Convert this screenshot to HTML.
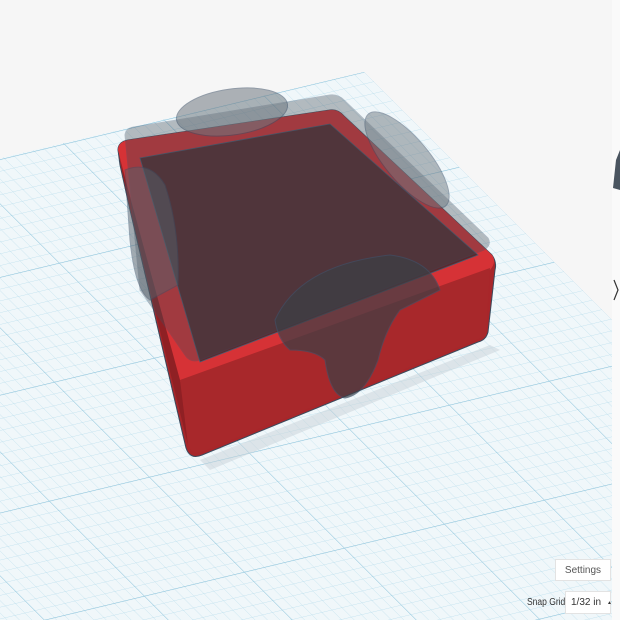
<!DOCTYPE html>
<html><head><style>
html,body{margin:0;padding:0;width:620px;height:620px;overflow:hidden;background:#f6f6f6;font-family:"Liberation Sans",sans-serif}
.btn{position:absolute;background:#fff;border:1px solid #e3e3e3;color:#555;font-size:10px;display:flex;align-items:center;justify-content:center;white-space:nowrap;box-sizing:border-box}
</style></head><body>
<svg width="620" height="620" style="position:absolute;left:0;top:0">
<defs>
<pattern id="g1" width="1" height="1" patternUnits="userSpaceOnUse" patternTransform="matrix(10,-2.4,9.5,9.5,364,72)">
<path d="M0 0H1M0 0V1" stroke="#b3dbeb" stroke-width="0.06" fill="none"/>
</pattern>
<pattern id="g2" width="10" height="10" patternUnits="userSpaceOnUse" patternTransform="matrix(10,-2.4,9.5,9.5,364,72)">
<path d="M0 0H10M0 0V10" stroke="#8cc3db" stroke-width="0.1" fill="none"/>
</pattern>
</defs>
<polygon points="364,72 0,158 0,620 620,620 620,328" fill="#f0f7fa"/>
<polygon points="364,72 0,158 0,620 620,620 620,328" fill="url(#g1)"/>
<polygon points="364,72 0,158 0,620 620,620 620,328" fill="url(#g2)"/>
<rect x="612" y="0" width="8" height="620" fill="#fafafa"/>
<path d="M614 280 L618 290 L614 300" stroke="#333" fill="none" stroke-width="1.2"/>
<polygon points="616,160 620,150 620,190 613,188" fill="#4a5560"/>
<polygon points="200,460 490,345 500,350 210,470" fill="#c8d2d8" opacity="0.5"/>
<path d="M118,150 Q118,142 128,140 L330,110 Q338,109 344,116 L492,255 Q497,262 495,270 L488,332 Q486,340 478,342 L202,455 Q190,460 186,448 L130,210 L120,165 Z" fill="#a8262a" stroke="#3b4a5c" stroke-width="1"/>
<path d="M118,150 Q118,142 128,140 L330,110 Q338,109 344,116 L492,255 Q497,262 490,270 L190,383 Q180,386 176,376 Z" fill="#d63236"/>
<path d="M180,380 L490,268 L486,336 L202,452 Q192,455 188,445 Z" fill="#a8282b"/>
<path d="M120,160 L180,380 L188,445 L128,200 Z" fill="#8f2024"/>
<path d="M140,158 L330,124 L478,255 L200,362 Z" fill="#5a2a2e" stroke="#4a5a70" stroke-width="0.8"/>
<path d="M125,135 Q126,128 134,127 L330,95 Q338,94 344,100 L488,238 Q492,245 484,250 L200,360 Q190,363 185,355 L140,290 Z" fill="#404b55" opacity="0.35" stroke="#3e5066" stroke-width="1"/>
<ellipse cx="232" cy="112" rx="56" ry="23" transform="rotate(-8 232 112)" fill="#6e7880" opacity="0.55" stroke="#3e5066"/>
<ellipse cx="407" cy="160" rx="60" ry="22" transform="rotate(50 407 160)" fill="#6e7880" opacity="0.5" stroke="#3e5066"/>
<path d="M125,170 Q150,160 165,185 Q180,230 178,285 L150,300 Q135,290 130,240 Z" fill="#55606a" opacity="0.5" stroke="#3e5066"/>
<path d="M275,320 Q300,265 390,255 Q430,260 440,290 Q420,300 400,310 Q385,330 378,360 Q365,395 345,398 Q330,395 325,360 Q315,350 290,350 Q278,340 275,320 Z" fill="#3c3f46" opacity="0.7" stroke="#3e5066"/>
</svg>
<div class="btn" style="left:555px;top:559px;width:56px;height:22px">Settings</div>
<div style="position:absolute;left:527px;top:597px;font-size:10px;color:#333;white-space:nowrap;transform:scaleX(0.85);transform-origin:left">Snap Grid</div>
<div class="btn" style="left:565px;top:591px;width:46px;height:23px;justify-content:flex-start;padding-left:5px;color:#333">1/32 in<span style="font-size:5px;margin-left:6px">▲</span></div>
</body></html>
